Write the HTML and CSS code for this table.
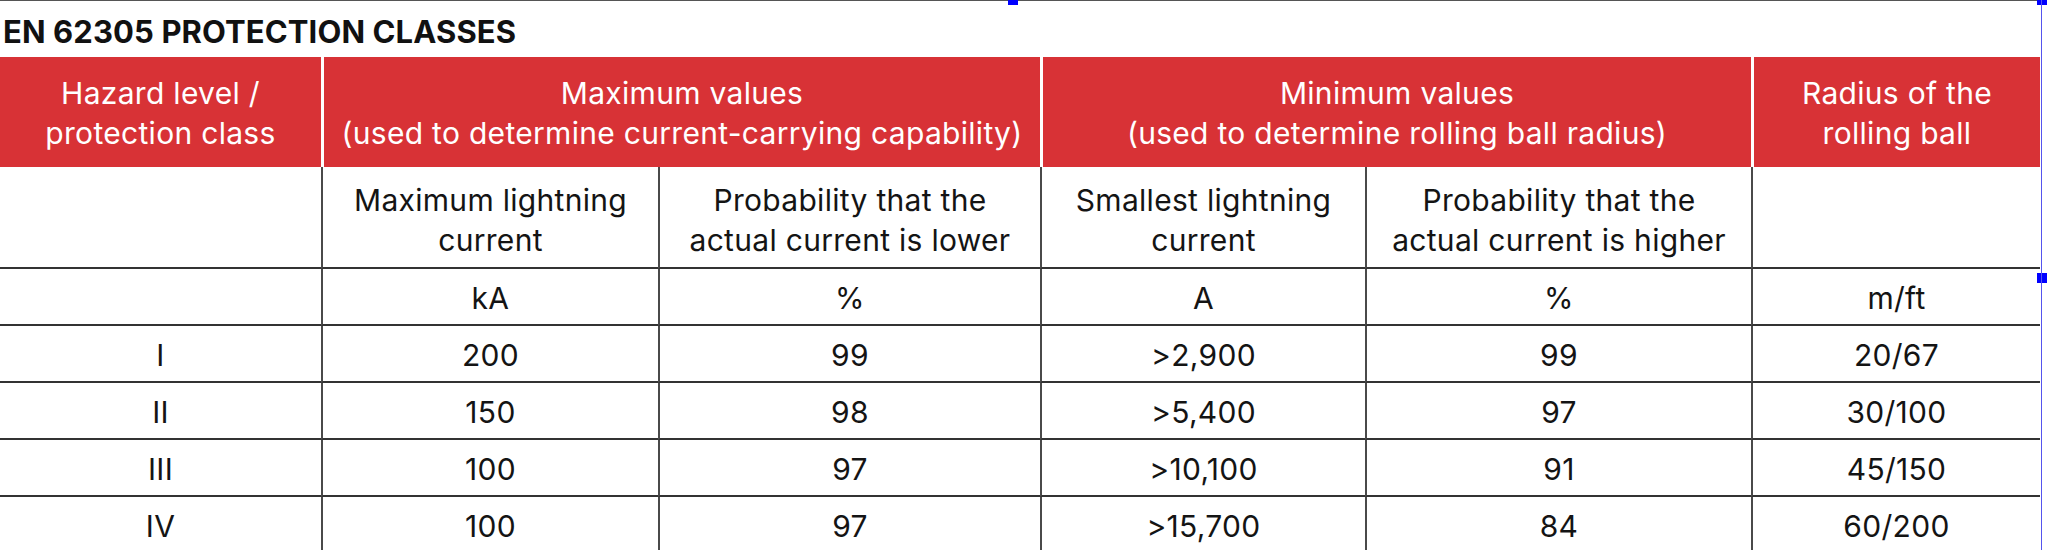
FILE: index.html
```html
<!DOCTYPE html>
<html lang="en">
<head>
<meta charset="utf-8">
<title>EN 62305 Protection Classes</title>
<link rel="stylesheet" href="styles.css">
</head>
<body>
<div class="page">
  <div class="frame">
    <div class="title">EN 62305 PROTECTION CLASSES</div>
    <div class="grid">
      <div class="h">Hazard level /<br>protection class</div>
      <div class="h span2">Maximum values<br>(used to determine current-carrying capability)</div>
      <div class="h span2">Minimum values<br>(used to determine rolling ball radius)</div>
      <div class="h">Radius of the<br>rolling ball</div>

      <div class="c sub first"></div>
      <div class="c sub">Maximum lightning<br>current</div>
      <div class="c sub">Probability that the<br>actual current is lower</div>
      <div class="c sub">Smallest lightning<br>current</div>
      <div class="c sub">Probability that the<br>actual current is higher</div>
      <div class="c sub"></div>

      <div class="c first"></div>
      <div class="c">kA</div>
      <div class="c">%</div>
      <div class="c">A</div>
      <div class="c">%</div>
      <div class="c">m/ft</div>

      <div class="c first">I</div>
      <div class="c">200</div>
      <div class="c">99</div>
      <div class="c">&gt;2,900</div>
      <div class="c">99</div>
      <div class="c">20/67</div>

      <div class="c first">II</div>
      <div class="c">150</div>
      <div class="c">98</div>
      <div class="c">&gt;5,400</div>
      <div class="c">97</div>
      <div class="c">30/100</div>

      <div class="c first">III</div>
      <div class="c">100</div>
      <div class="c">97</div>
      <div class="c">&gt;10,100</div>
      <div class="c">91</div>
      <div class="c">45/150</div>

      <div class="c first">IV</div>
      <div class="c">100</div>
      <div class="c">97</div>
      <div class="c">&gt;15,700</div>
      <div class="c">84</div>
      <div class="c">60/200</div>
    </div>
  </div>
  <span class="handle handle-top"></span>
  <span class="handle handle-corner"></span>
  <span class="handle handle-side"></span>
  <span class="guide"></span>
</div>
</body>
</html>
```

FILE: styles.css
```css
html, body {
  margin: 0;
  padding: 0;
  background: #ffffff;
}

body {
  font-family: Inter, "Liberation Sans", sans-serif;
  color: #141414;
}

.page {
  position: relative;
  width: 2048px;
  height: 550px;
  overflow: hidden;
}

.frame {
  width: 2040px;
  border-top: 1px solid #555555;
}

.title {
  box-sizing: border-box;
  height: 56px;
  padding: 5px 0 0 3px;
  font-size: 31px;
  font-weight: 700;
  line-height: 51px;
  letter-spacing: 0.1px;
  color: #111111;
}

.grid {
  display: grid;
  grid-template-columns: 321px 337px 382px 325px 386px 289px;
  grid-auto-rows: 57px;
  grid-template-rows: 110px 102px;
}

.h {
  box-sizing: border-box;
  display: flex;
  align-items: center;
  justify-content: center;
  text-align: center;
  background: #d83236;
  color: #ffffff;
  font-size: 30px;
  line-height: 40px;
  letter-spacing: 0.3px;
  padding-top: 1px;
}

.h + .h {
  border-left: 3px solid #ffffff;
}

.span2 {
  grid-column: span 2;
}

.c {
  box-sizing: border-box;
  display: flex;
  align-items: center;
  justify-content: center;
  text-align: center;
  font-size: 30px;
  line-height: 40px;
  letter-spacing: 0.3px;
  border-bottom: 2px solid #333333;
  border-left: 2px solid #4a4a4a;
  padding-top: 2px;
}

.c.first {
  border-left: none;
}

.sub {
  padding-top: 5px;
}

.guide {
  position: absolute;
  left: 2041px;
  top: 0;
  width: 1px;
  height: 550px;
  background: #5555ee;
}

.handle {
  position: absolute;
  width: 10px;
  height: 10px;
  background: #0000ff;
}

.handle-top {
  left: 1008px;
  top: -5px;
}

.handle-corner {
  left: 2037px;
  top: -5px;
}

.handle-side {
  left: 2037px;
  top: 273px;
}
```
